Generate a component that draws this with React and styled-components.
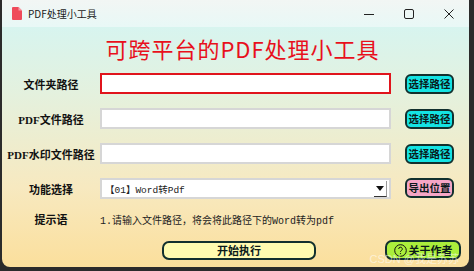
import React from 'react'
import styled, { createGlobalStyle } from 'styled-components'

const Global = createGlobalStyle`
body{
  margin:0;
  background:#2b2b2b;
  font-family:"Noto Sans CJK SC","Noto Sans",sans-serif;
}
`

const Window = styled.div`
width:467px;
height:267px;
margin-left:2px;
border-radius:0 0 8px 8px;
overflow:hidden;
display:flex;
flex-direction:column;
position:relative;
background:linear-gradient(180deg,#d2f6f6 0%,#e4f1de 35%,#f7e9c0 70%,#fbdf9c 100%);
`

const TitleBar = styled.div`
height:27px;
flex-shrink:0;
display:flex;
align-items:center;
padding-left:10px;
background:linear-gradient(180deg,#f2f6f4,#e8f8f6);
font-family:"Noto Sans CJK SC",sans-serif;
font-size:10px;
color:#1a1a1a;
`

const TitleText = styled.span`
margin-left:6px;
flex:1;
`

const WinBtn = styled.div`
width:40px;
height:27px;
display:flex;
align-items:center;
justify-content:center;
`

const Heading = styled.h1`
margin:0;
height:46px;
display:flex;
align-items:center;
justify-content:center;
padding-left:14px;
padding-bottom:5px;
box-sizing:border-box;
font-family:"Noto Sans CJK SC",sans-serif;
font-weight:400;
font-size:22px;
color:#e8101c;
letter-spacing:1px;
`

const Form = styled.div`
display:grid;
grid-template-columns:98px 305px 49px;
grid-template-rows:repeat(4,21px) 12px;
row-gap:14px;
`

const Label = styled.div`
display:flex;
align-items:center;
justify-content:center;
font-family:"Liberation Serif","Noto Sans CJK SC",serif;
font-weight:bold;
font-size:11px;
color:#111;
`

const Input = styled.div`
box-sizing:border-box;
width:291px;
height:21px;
background:#fff;
border:2px solid ${p => p.$active ? '#e0141c' : '#d6d6d6'};
`

const Select = styled.div`
box-sizing:border-box;
width:291px;
height:21px;
background:#fff;
border:2px solid #d6d6d6;
display:flex;
align-items:center;
padding-left:3px;
font-family:"Liberation Mono","Noto Sans CJK SC",monospace;
font-size:9.5px;
color:#222;
`

const SelectText = styled.span`
flex:1;
`

const Arrow = styled.div`
width:12px;
height:15px;
margin-right:2px;
border-bottom:1px solid #333;
border-right:1px solid #999;
display:flex;
align-items:center;
justify-content:center;
`

const ActionBtn = styled.div`
box-sizing:border-box;
height:20px;
align-self:center;
margin-top:${p => p.$shift || 0}px;
border:2px solid #12302e;
border-radius:6px;
background:${p => p.$bg};
display:flex;
align-items:center;
justify-content:center;
gap:2px;
font-family:"Noto Sans CJK SC",sans-serif;
font-weight:bold;
font-size:10.5px;
color:#0a1a1a;
white-space:nowrap;
`

const Hint = styled.div`
grid-column:2 / 4;
display:flex;
align-items:center;
font-family:"Liberation Mono","Noto Sans CJK SC",monospace;
font-size:10px;
color:#222;
`

const Footer = styled.div`
display:flex;
align-items:center;
margin-top:15px;
padding-left:160px;
`

const StartBtn = styled(ActionBtn)`
width:154px;
height:19px;
border-radius:7px;
font-size:11px;
`

const AboutBtn = styled(ActionBtn)`
width:76px;
height:20px;
margin-left:69px;
border-radius:7px;
font-size:11px;
`

const Watermark = styled.div`
position:absolute;
right:10px;
bottom:1px;
font-family:"Liberation Sans","Noto Sans CJK SC",sans-serif;
font-size:11px;
color:rgba(255,255,255,0.55);
pointer-events:none;
`

const rows = [
  { label: '文件夹路径', active: true },
  { label: 'PDF文件路径' },
  { label: 'PDF水印文件路径' },
]

const App = () => {
  return (
    <>
      <Global />
      <Window>
        <TitleBar>
          <svg width="10" height="13" viewBox="0 0 10 13">
            <path d="M1 0h5.5L10 3.5V12a1 1 0 0 1-1 1H1a1 1 0 0 1-1-1V1a1 1 0 0 1 1-1z" fill="#ef4b5a" />
            <path d="M6.5 0v3.5H10z" fill="#f8a0a8" />
          </svg>
          <TitleText>PDF处理小工具</TitleText>
          <WinBtn>
            <svg width="10" height="10"><path d="M0 5.5h10" stroke="#222" strokeWidth="1" /></svg>
          </WinBtn>
          <WinBtn>
            <svg width="10" height="10"><rect x="0.5" y="0.5" width="9" height="9" rx="1.5" fill="none" stroke="#222" strokeWidth="1" /></svg>
          </WinBtn>
          <WinBtn>
            <svg width="10" height="10"><path d="M0.5 0.5l9 9M9.5 0.5l-9 9" stroke="#222" strokeWidth="1" /></svg>
          </WinBtn>
        </TitleBar>
        <Heading>可跨平台的PDF处理小工具</Heading>
        <Form>
          {rows.map(r => (
            <React.Fragment key={r.label}>
              <Label>{r.label}</Label>
              <Input $active={r.active} />
              <ActionBtn $bg="#14e4e4">选择路径</ActionBtn>
            </React.Fragment>
          ))}
          <Label>功能选择</Label>
          <Select>
            <SelectText>【01】Word转Pdf</SelectText>
            <Arrow>
              <svg width="8" height="5"><path d="M0 0h8L4 5z" fill="#111" /></svg>
            </Arrow>
          </Select>
          <ActionBtn $bg="#f6a6c6" $shift={-2}>导出位置</ActionBtn>
          <Label>提示语</Label>
          <Hint>1.请输入文件路径，将会将此路径下的Word转为pdf</Hint>
        </Form>
        <Footer>
          <StartBtn $bg="#fffbb0">开始执行</StartBtn>
          <AboutBtn $bg="#aaee3c">
            <svg width="13" height="13" viewBox="0 0 13 13">
              <circle cx="6.5" cy="6.5" r="5.8" fill="none" stroke="#111" strokeWidth="1" />
              <path d="M4.7 5a1.8 1.8 0 1 1 2.6 1.6c-.6.3-.8.6-.8 1.3" fill="none" stroke="#111" strokeWidth="1" />
              <circle cx="6.5" cy="9.6" r="0.7" fill="#111" />
            </svg>
            关于作者
          </AboutBtn>
        </Footer>
        <Watermark>CSDN @我是苏苏</Watermark>
      </Window>
    </>
  )
}

export default App
